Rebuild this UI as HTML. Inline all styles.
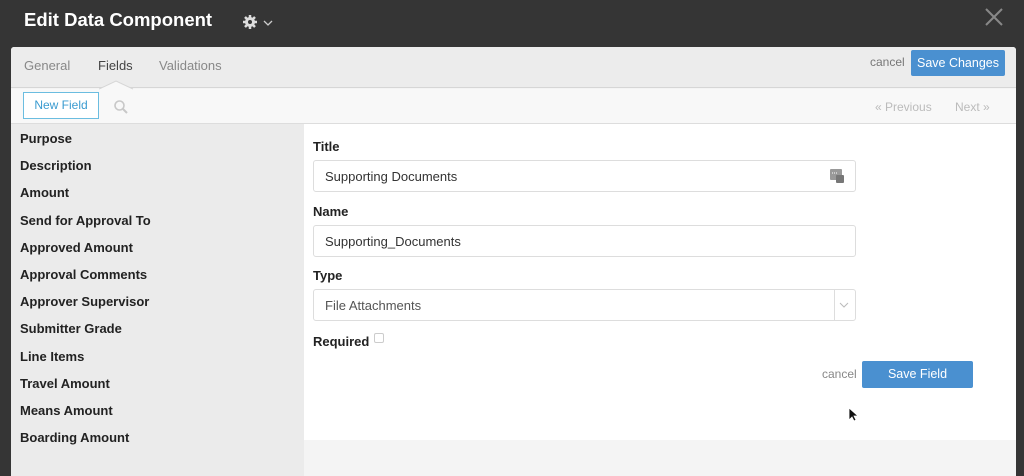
<!DOCTYPE html>
<html><head><style>
*{margin:0;padding:0;box-sizing:border-box}
body{width:1024px;height:476px;background:#353535;font-family:"Liberation Sans",sans-serif;position:relative;overflow:hidden}
.abs{position:absolute}
.title{left:24px;top:9px;color:#fff;font-size:18.5px;font-weight:bold}
.panel{left:11px;top:47px;width:1005px;height:429px;background:#f4f4f4;border-radius:3px 3px 0 0}
.tabs{left:11px;top:47px;width:1005px;height:41px;background:#ececec;border-bottom:1px solid #d6d6d6;border-radius:3px 3px 0 0}
.tab{top:58px;font-size:13px;color:#888}
.tool{left:11px;top:89px;width:1005px;height:35px;background:#f8f8f8;border-bottom:1px solid #ddd}
.side{left:11px;top:124px;width:293px;height:352px;background:#ebebeb}
.side div{font-size:13px;font-weight:bold;color:#222;height:27.2px;padding-left:9px;line-height:30px}
.content{left:304px;top:124px;width:712px;height:316px;background:#fff}
.lbl{font-size:13px;font-weight:bold;color:#222}
.inp{left:313px;width:543px;height:32px;border:1px solid #ddd;border-radius:3px;background:#fff;font-size:13px;color:#333;padding-left:11px;line-height:32px}
.btn{background:#4a90d0;color:#fff;font-size:12.5px;text-align:center;border-radius:2px}
</style></head><body>
<div class="abs title">Edit Data Component</div>
<svg class="abs" style="left:242px;top:13px" width="34" height="18" viewBox="0 0 34 18"><circle cx="8" cy="9" r="5" fill="#ddd"/><g stroke="#ddd" stroke-width="2.5"><path d="M8 2v14M1 9h14M3 4l10 10M13 4L3 14"/></g><circle cx="8" cy="9" r="2" fill="#353535"/><path d="M22 8l4 4 4-4" stroke="#ccc" stroke-width="1.3" fill="none"/></svg>
<svg class="abs" style="left:985px;top:8px" width="18" height="18"><path d="M1 1L17 17M17 1L1 17" stroke="#888" stroke-width="2"/></svg>
<div class="abs panel"></div>
<div class="abs tabs"></div>
<div class="abs tab" style="left:24px">General</div>
<div class="abs tab" style="left:98px;color:#444">Fields</div>
<div class="abs tab" style="left:159px">Validations</div>
<div class="abs" style="left:870px;top:55px;font-size:12px;color:#777">cancel</div>
<div class="abs btn" style="left:911px;top:50px;width:94px;height:26px;line-height:26px">Save Changes</div>
<div class="abs tool"></div>
<svg class="abs" style="left:99px;top:80px" width="36" height="10"><path d="M0 9L17 1 34 9" stroke="#d6d6d6" fill="#f8f8f8"/></svg>
<div class="abs" style="left:23px;top:92px;width:76px;height:27px;border:1px solid #6bbde0;background:#fff;color:#3a9bd0;font-size:12px;text-align:center;line-height:25px">New Field</div>
<svg class="abs" style="left:113px;top:99px" width="16" height="16"><circle cx="6.5" cy="6.5" r="4.5" stroke="#c8c8c8" stroke-width="1.6" fill="none"/><path d="M10 10l4 4" stroke="#c8c8c8" stroke-width="2"/></svg>
<div class="abs" style="left:875px;top:100px;font-size:12px;color:#bbb">« Previous</div>
<div class="abs" style="left:955px;top:100px;font-size:12px;color:#bbb">Next »</div>
<div class="abs side">
<div>Purpose</div><div>Description</div><div>Amount</div><div>Send for Approval To</div><div>Approved Amount</div><div>Approval Comments</div><div>Approver Supervisor</div><div>Submitter Grade</div><div>Line Items</div><div>Travel Amount</div><div>Means Amount</div><div>Boarding Amount</div>
</div>
<div class="abs content"></div>
<div class="abs lbl" style="left:313px;top:139px">Title</div>
<div class="abs inp" style="top:160px">Supporting Documents</div>
<svg class="abs" style="left:829px;top:168px" width="16" height="16"><rect x="1" y="1" width="12" height="11" rx="1" fill="#999"/><rect x="7" y="7" width="8" height="8" rx="1" fill="#777"/><path d="M3 5h1M5 5h1M7 5h1" stroke="#fff"/></svg>
<div class="abs lbl" style="left:313px;top:204px">Name</div>
<div class="abs inp" style="top:225px">Supporting_Documents</div>
<div class="abs lbl" style="left:313px;top:268px">Type</div>
<div class="abs inp" style="top:289px;color:#555">File Attachments</div>
<div class="abs" style="left:834px;top:290px;width:1px;height:30px;background:#ddd"></div>
<svg class="abs" style="left:838px;top:301px" width="12" height="8"><path d="M2 2l4 4 4-4" stroke="#bbb" fill="none"/></svg>
<div class="abs lbl" style="left:313px;top:334px">Required</div>
<div class="abs" style="left:374px;top:333px;width:10px;height:10px;border:1px solid #ccc;border-radius:2px"></div>
<div class="abs" style="left:822px;top:367px;font-size:12px;color:#888">cancel</div>
<div class="abs btn" style="left:862px;top:361px;width:111px;height:27px;line-height:27px">Save Field</div>
<svg class="abs" style="left:848px;top:407px" width="10" height="16"><path d="M1 1v12l3-3 2 4 2-1-2-4h4z" fill="#111" stroke="#fff" stroke-width="0.8"/></svg>
</body></html>
